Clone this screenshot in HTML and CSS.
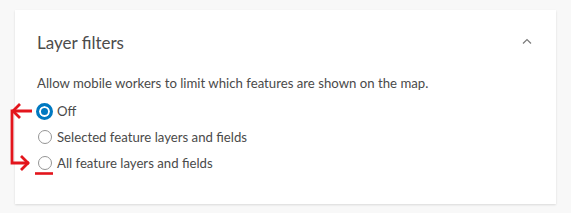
FILE: index.html
```html
<!DOCTYPE html>
<html lang="en">
  <head>
    <meta charset="UTF-8" />
    <title>Layer filters</title>
    <link rel="stylesheet" href="styles.css">
  </head>
  <body>
    <div class="card">
      <div class="card-head">
        <h2 class="title">Layer filters</h2>
        <svg class="chevron" width="10" height="6" viewBox="0 0 10 6">
          <path d="M1 5.5 L5 1.5 L9 5.5" fill="none" stroke="#7a7a7a" stroke-width="1.2" />
        </svg>
      </div>
      <div class="card-body">
        <p class="desc">Allow mobile workers to limit which features are shown on the map.</p>
        <div class="options">
          <label class="option checked"><span class="radio"></span>Off</label>
          <label class="option"><span class="radio"></span>Selected feature layers and fields</label>
          <label class="option"><span class="radio"></span>All feature layers and fields</label>
        </div>
      </div>
    </div>
    <svg class="marks" width="60" height="180" viewBox="0 0 60 180">
      <path d="M32 111 H12 V163 H29" fill="none" stroke="#e3151c" stroke-width="2.8" />
      <path d="M20 104 L13 111 L20 118" fill="none" stroke="#e3151c" stroke-width="2.8" />
      <path d="M21 156 L28 163 L21 170" fill="none" stroke="#e3151c" stroke-width="2.8" />
      <path d="M35 173.5 H53" fill="none" stroke="#e3151c" stroke-width="2.6" />
    </svg>
  </body>
</html>
```

FILE: styles.css
```css
* {
  margin: 0;
  padding: 0;
  box-sizing: border-box;
}
body {
  background-color: #f8f8f8;
  font-family: "Lato", "Open Sans", sans-serif;
  color: #4a4a4a;
  padding: 10px 15px;
  position: relative;
}
.card {
  width: 541px;
  height: 194px;
  background-color: #fff;
  box-shadow: 0 1px 2px rgba(0, 0, 0, 0.12);
}
.card-head {
  height: 64px;
  display: flex;
  align-items: center;
  justify-content: space-between;
  padding: 0 24px 0 22px;
}
.title {
  font-size: 17px;
  font-weight: 400;
  color: #4c4c4c;
}
.chevron {
  margin-top: -3px;
}
.card-body {
  padding: 0 22px;
}
.desc {
  font-size: 13.2px;
  line-height: 18px;
}
.options {
  display: flex;
  flex-direction: column;
  gap: 8px;
  margin-top: 10px;
}
.option {
  display: flex;
  align-items: center;
  gap: 5px;
  font-size: 13.2px;
  line-height: 18px;
}
.radio {
  width: 14px;
  height: 14px;
  border-radius: 50%;
  border: 1px solid #959595;
  margin-left: 1px;
}
.option.checked .radio {
  width: 17px;
  height: 17px;
  margin-left: -1px;
  margin-right: -1px;
  border: 3px solid #0079c1;
  box-shadow: inset 0 0 0 2px #fff;
  background-color: #0079c1;
}
.marks {
  position: absolute;
  left: 0;
  top: 0;
}
```
